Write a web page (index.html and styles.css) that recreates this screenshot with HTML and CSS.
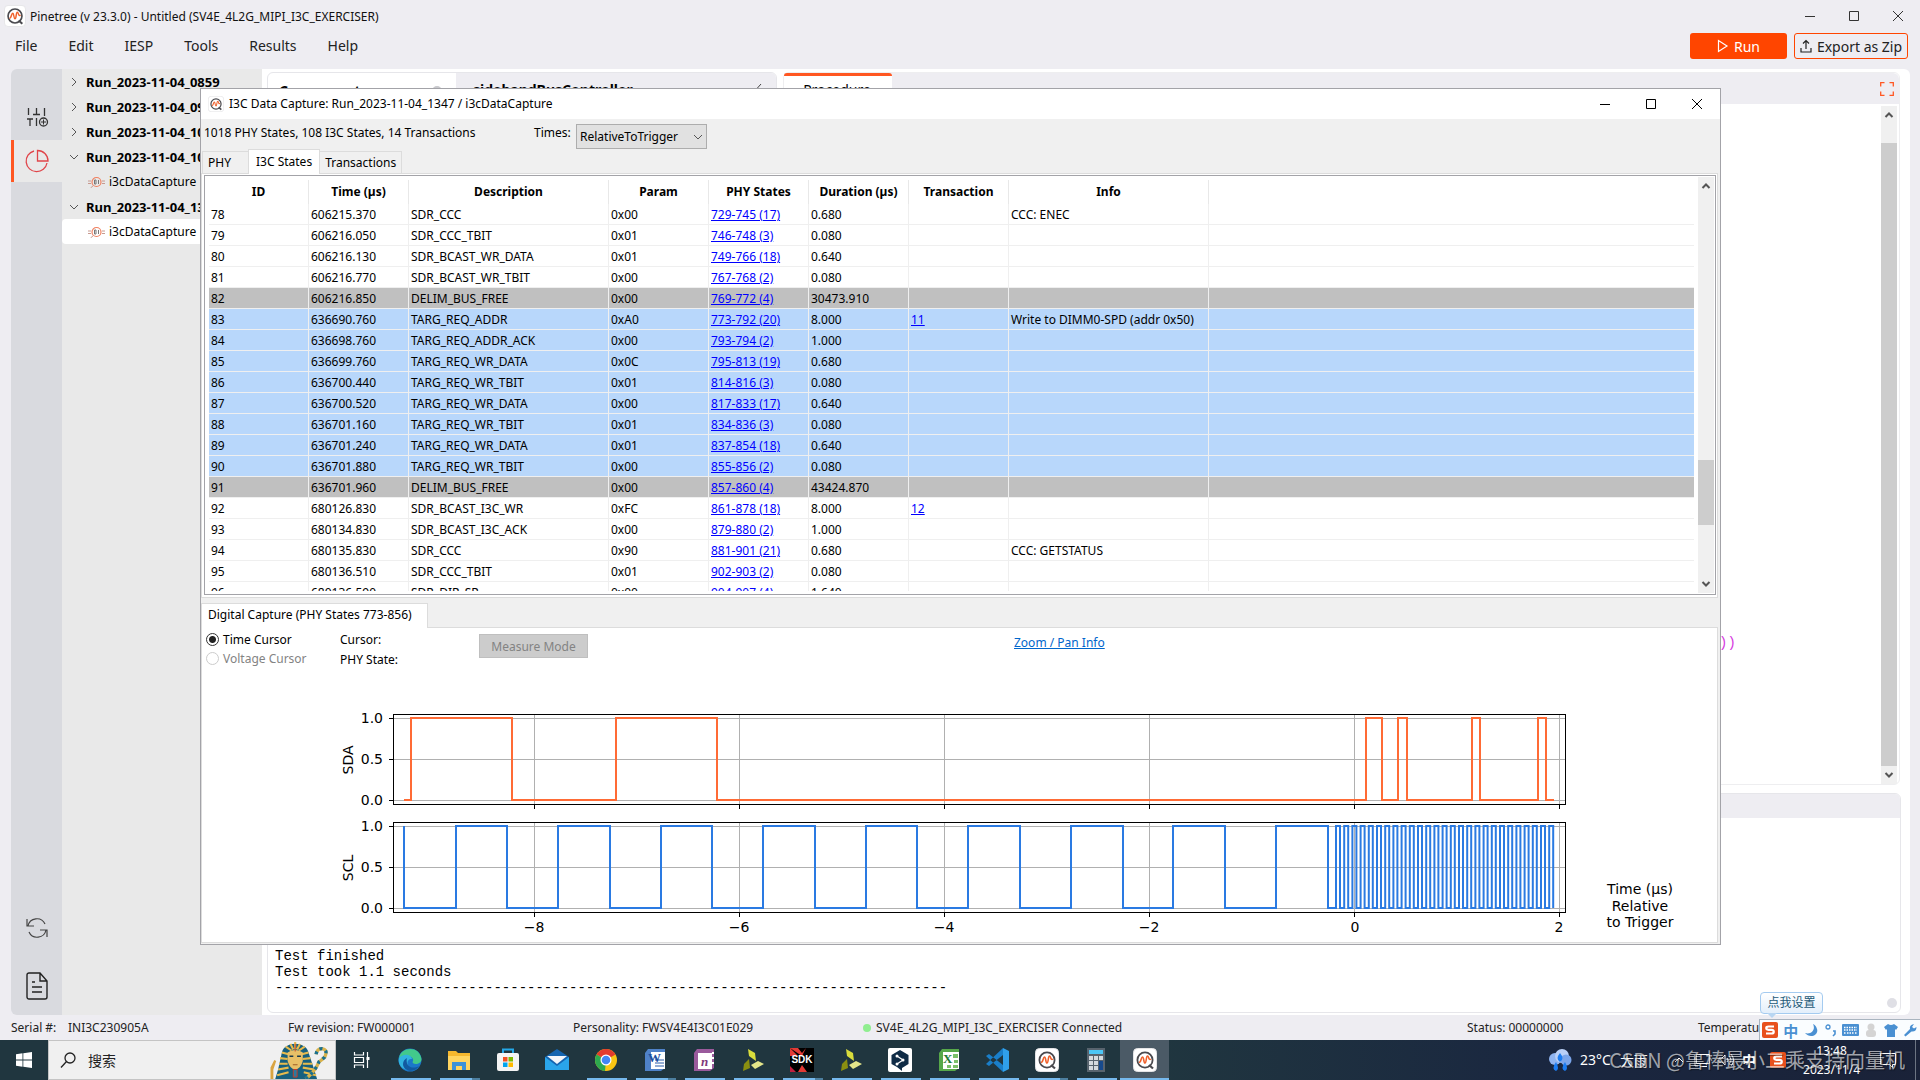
FILE: index.html
```html
<!DOCTYPE html>
<html lang="en">
<head>
  <meta charset="UTF-8" />
  <meta name="viewport" content="width=device-width, initial-scale=1.0"/>
  <title>Pinetree - I3C Data Capture</title>
  <link rel="stylesheet" href="styles.css">
</head>
<body>

  <!-- Shared icons -->
  <svg class="defs" aria-hidden="true">
    <symbol id="logo" viewBox="0 0 24 24">
      <rect x="0.5" y="0.5" width="23" height="23" rx="4" fill="#fff" stroke="#e4e4e6"/>
      <circle cx="12" cy="12" r="7.6" fill="none" stroke="#4a4a4f" stroke-width="1.8"/>
      <path d="M16 17l4 3.500" stroke="#4a4a4f" stroke-width="2.200"/>
      <path d="M6 14c2 1 2-5 3.500-5s1 6 2.500 6 1-7 2.500-7 1 5 3.500 3" fill="none" stroke="#f0602a" stroke-width="1.600"/>
    </symbol>
    <symbol id="capture" viewBox="0 0 17 12">
      <circle cx="8.500" cy="6" r="4.500" fill="none" stroke="#f08060" stroke-width="1.200"/>
      <path d="M0 5h3M0 7.500h3M14 5h3M14 7.500h3M5.500 9.500l-3 2.500" fill="none" stroke="#c79a90"/>
      <path d="M6.500 4h1.500v4h-1.500zM10.500 4v4" fill="none" stroke="#777"/>
    </symbol>
    <symbol id="right" viewBox="0 0 10 10"><path d="M3 1l4 4-4 4" fill="none" stroke="#555"/></symbol>
    <symbol id="down" viewBox="0 0 10 10"><path d="M1 3l4 4 4-4" fill="none" stroke="#555"/></symbol>
    <symbol id="sup" viewBox="0 0 10 10"><path d="M1.500 7L5 3.500 8.500 7" fill="none" stroke="#555" stroke-width="2"/></symbol>
    <symbol id="sdown" viewBox="0 0 10 10"><path d="M1.500 3L5 6.500 8.500 3" fill="none" stroke="#555" stroke-width="2"/></symbol>
    <symbol id="min" viewBox="0 0 10 10"><path d="M0 5.500h10" stroke="currentColor"/></symbol>
    <symbol id="max" viewBox="0 0 10 10"><path d="M.5.5h9v9h-9z" fill="none" stroke="currentColor"/></symbol>
    <symbol id="close" viewBox="0 0 10 10"><path d="M0 0l10 10M10 0L0 10" stroke="currentColor"/></symbol>
    <symbol id="xilinx" viewBox="0 0 24 24">
      <path d="M7 1l7 4 1 8-7-5z" fill="#d9dd3c"/>
      <path d="M8 11l1 9-7 3 1-7z" fill="#8a8f10"/>
      <path d="M10 17l7-4 6 3-9 5z" fill="#e3e58a"/>
    </symbol>
    <symbol id="sogou" viewBox="0 0 16 16">
      <rect width="16" height="16" rx="2" fill="#e8501c"/>
      <path d="M12 4.500H6.500c-3 0-3 3 0 3.300h3c3 0 3 3.700 0 3.700H4" fill="none" stroke="#fff" stroke-width="2.200"/>
    </symbol>
  </svg>

  <!-- Title bar -->
  <header class="titlebar">
    <svg class="app-logo"><use href="#logo"/></svg>
    <span>Pinetree (v 23.3.0) - Untitled (SV4E_4L2G_MIPI_I3C_EXERCISER)</span>
    <div class="win-buttons">
      <button aria-label="Minimize"><svg><use href="#min"/></svg></button>
      <button aria-label="Maximize"><svg><use href="#max"/></svg></button>
      <button aria-label="Close"><svg><use href="#close"/></svg></button>
    </div>
  </header>

  <!-- Menu -->
  <nav class="menubar">
    <a href="#">File</a>
    <a href="#">Edit</a>
    <a href="#">IESP</a>
    <a href="#">Tools</a>
    <a href="#">Results</a>
    <a href="#">Help</a>
    <div class="actions">
      <button class="run-btn"><svg viewBox="0 0 12 14"><path d="M1.500 1.500v11l8.500-5.500z" fill="none" stroke="#fff" stroke-width="1.200"/></svg>Run</button>
      <button class="export-btn"><svg viewBox="0 0 12 14"><path d="M1 9v4h10V9M6 10V2M3 4.500L6 1.500l3 3" fill="none" stroke="#222" stroke-width="1.200"/></svg>Export as Zip</button>
    </div>
  </nav>

  <!-- Main area -->
  <main class="main">
    <aside class="sidebar">
      <button class="side-btn" aria-label="Settings">
        <svg viewBox="0 0 24 20"><path d="M3.500 1v7M11.500 1v6M8 7.500h7M19.500 1v8M2 12h6M5 12v7M11.500 11v8" fill="none" stroke="#333" stroke-width="1.300"/><circle cx="18.500" cy="15" r="4" fill="none" stroke="#333" stroke-width="1.300"/><path d="M16 15h5M18.500 12.500v5" stroke="#333"/></svg>
      </button>
      <button class="side-btn active" aria-label="Results">
        <svg viewBox="0 0 24 24"><path d="M9 2A10.500 10.500 0 1 0 22 14" fill="none" stroke="#e0454a" stroke-width="1.300"/><path d="M12.500 1.500v10.500h10.500A10.500 10.500 0 0 0 12.500 1.500z" fill="none" stroke="#e0454a" stroke-width="1.300"/></svg>
      </button>
      <div class="side-bottom">
        <button class="side-btn" aria-label="Refresh">
          <svg viewBox="0 0 24 22"><path d="M3 9a9 9 0 0 1 17-2M21 13a9 9 0 0 1-17 2M2 2v7h7M22 20v-7h-7" fill="none" stroke="#444" stroke-width="1.200"/></svg>
        </button>
        <button class="side-btn" aria-label="Log">
          <svg class="doc" viewBox="0 0 22 28"><path d="M3 1h11l7 8v16a2 2 0 0 1-2 2H3a2 2 0 0 1-2-2V3a2 2 0 0 1 2-2zM14 1v8h7M6 10h3M6 15h10M6 20h10" fill="none" stroke="#222" stroke-width="1.400"/></svg>
        </button>
      </div>
    </aside>

    <ul class="tree">
      <li><svg><use href="#right"/></svg><b>Run_2023-11-04_0859</b></li>
      <li><svg><use href="#right"/></svg><b>Run_2023-11-04_09</b></li>
      <li><svg><use href="#right"/></svg><b>Run_2023-11-04_10</b></li>
      <li><svg><use href="#down"/></svg><b>Run_2023-11-04_10</b></li>
      <li class="child"><svg><use href="#capture"/></svg>i3cDataCapture</li>
      <li><svg><use href="#down"/></svg><b>Run_2023-11-04_1347</b></li>
      <li class="child selected"><svg><use href="#capture"/></svg>i3cDataCapture</li>
    </ul>

    <section class="workspace">
      <div class="upper">
        <div class="components">
          <div class="comp-head"><b>Components</b><span class="gear"></span></div>
          <div class="comp-head grey"><b>sidebandBusController</b><svg viewBox="0 0 10 10"><path d="M9 0L1 9" stroke="#444"/></svg></div>
        </div>
        <div class="procedure">
          <div class="proc-head">
            <button class="proc-tab">Procedure</button>
            <button class="expand" aria-label="Full screen"><svg viewBox="0 0 14 14"><path d="M.7 4.500V.7h3.800M9.500.7h3.800v3.800M13.300 9.500v3.800H9.500M4.500 13.300H.7V9.500" fill="none" stroke="#ff5722" stroke-width="1.300"/></svg></button>
          </div>
          <div class="proc-body">
            <code>))</code>
            <div class="scrollbar">
              <svg><use href="#sup"/></svg>
              <div class="thumb"></div>
              <svg><use href="#sdown"/></svg>
            </div>
          </div>
        </div>
      </div>
      <div class="console">
        <div class="console-head"></div>
<pre>Test finished
Test took 1.1 seconds
--------------------------------------------------------------------------------</pre>
        <span class="dot"></span>
      </div>
    </section>
  </main>

  <!-- Status bar -->
  <footer class="statusbar">
    <span class="serial">Serial #:</span>
    <span class="serial-no">INI3C230905A</span>
    <span class="fw">Fw revision: FW000001</span>
    <span class="personality">Personality: FWSV4E4I3C01E029</span>
    <span class="connected"><i></i>SV4E_4L2G_MIPI_I3C_EXERCISER Connected</span>
    <span class="state">Status: 00000000</span>
    <span class="temp">Temperature:</span>
  </footer>

  <!-- Capture window -->
  <section class="dialog">
    <header class="dialog-title">
      <svg class="app-logo"><use href="#logo"/></svg>
      <span>I3C Data Capture: Run_2023-11-04_1347 / i3cDataCapture</span>
      <div class="win-buttons">
        <button aria-label="Minimize"><svg><use href="#min"/></svg></button>
        <button aria-label="Maximize"><svg><use href="#max"/></svg></button>
        <button aria-label="Close"><svg><use href="#close"/></svg></button>
      </div>
    </header>

    <div class="info-row">
      <span class="counts">1018 PHY States, 108 I3C States, 14 Transactions</span>
      <label for="times">Times:</label>
      <div class="select-wrap">
        <select id="times"><option>RelativeToTrigger</option></select>
        <svg><use href="#down"/></svg>
      </div>
    </div>

    <div class="tabs">
      <button class="tab phy">PHY</button>
      <button class="tab active">I3C States</button>
      <button class="tab trans">Transactions</button>
    </div>

    <div class="pane states">
      <div class="frame">
        <div class="table-clip">
          <table>
            <colgroup><col class="w1"><col class="w1"><col class="w2"><col class="w1"><col class="w1"><col class="w1"><col class="w1"><col class="w2"><col></colgroup>
            <thead>
              <tr><th>ID</th><th>Time (µs)</th><th>Description</th><th>Param</th><th>PHY States</th><th>Duration (µs)</th><th>Transaction</th><th>Info</th><th></th></tr>
            </thead>
            <tbody>
              <tr><td>78</td><td>606215.370</td><td>SDR_CCC</td><td>0x00</td><td><a href="#">729-745 (17)</a></td><td>0.680</td><td></td><td>CCC: ENEC</td><td></td></tr>
              <tr><td>79</td><td>606216.050</td><td>SDR_CCC_TBIT</td><td>0x01</td><td><a href="#">746-748 (3)</a></td><td>0.080</td><td></td><td></td><td></td></tr>
              <tr><td>80</td><td>606216.130</td><td>SDR_BCAST_WR_DATA</td><td>0x01</td><td><a href="#">749-766 (18)</a></td><td>0.640</td><td></td><td></td><td></td></tr>
              <tr><td>81</td><td>606216.770</td><td>SDR_BCAST_WR_TBIT</td><td>0x00</td><td><a href="#">767-768 (2)</a></td><td>0.080</td><td></td><td></td><td></td></tr>
              <tr class="free"><td>82</td><td>606216.850</td><td>DELIM_BUS_FREE</td><td>0x00</td><td><a href="#">769-772 (4)</a></td><td>30473.910</td><td></td><td></td><td></td></tr>
              <tr class="sel"><td>83</td><td>636690.760</td><td>TARG_REQ_ADDR</td><td>0xA0</td><td><a href="#">773-792 (20)</a></td><td>8.000</td><td><a href="#">11</a></td><td>Write to DIMM0-SPD (addr 0x50)</td><td></td></tr>
              <tr class="sel"><td>84</td><td>636698.760</td><td>TARG_REQ_ADDR_ACK</td><td>0x00</td><td><a href="#">793-794 (2)</a></td><td>1.000</td><td></td><td></td><td></td></tr>
              <tr class="sel"><td>85</td><td>636699.760</td><td>TARG_REQ_WR_DATA</td><td>0x0C</td><td><a href="#">795-813 (19)</a></td><td>0.680</td><td></td><td></td><td></td></tr>
              <tr class="sel"><td>86</td><td>636700.440</td><td>TARG_REQ_WR_TBIT</td><td>0x01</td><td><a href="#">814-816 (3)</a></td><td>0.080</td><td></td><td></td><td></td></tr>
              <tr class="sel"><td>87</td><td>636700.520</td><td>TARG_REQ_WR_DATA</td><td>0x00</td><td><a href="#">817-833 (17)</a></td><td>0.640</td><td></td><td></td><td></td></tr>
              <tr class="sel"><td>88</td><td>636701.160</td><td>TARG_REQ_WR_TBIT</td><td>0x01</td><td><a href="#">834-836 (3)</a></td><td>0.080</td><td></td><td></td><td></td></tr>
              <tr class="sel"><td>89</td><td>636701.240</td><td>TARG_REQ_WR_DATA</td><td>0x01</td><td><a href="#">837-854 (18)</a></td><td>0.640</td><td></td><td></td><td></td></tr>
              <tr class="sel"><td>90</td><td>636701.880</td><td>TARG_REQ_WR_TBIT</td><td>0x00</td><td><a href="#">855-856 (2)</a></td><td>0.080</td><td></td><td></td><td></td></tr>
              <tr class="free"><td>91</td><td>636701.960</td><td>DELIM_BUS_FREE</td><td>0x00</td><td><a href="#">857-860 (4)</a></td><td>43424.870</td><td></td><td></td><td></td></tr>
              <tr><td>92</td><td>680126.830</td><td>SDR_BCAST_I3C_WR</td><td>0xFC</td><td><a href="#">861-878 (18)</a></td><td>8.000</td><td><a href="#">12</a></td><td></td><td></td></tr>
              <tr><td>93</td><td>680134.830</td><td>SDR_BCAST_I3C_ACK</td><td>0x00</td><td><a href="#">879-880 (2)</a></td><td>1.000</td><td></td><td></td><td></td></tr>
              <tr><td>94</td><td>680135.830</td><td>SDR_CCC</td><td>0x90</td><td><a href="#">881-901 (21)</a></td><td>0.680</td><td></td><td>CCC: GETSTATUS</td><td></td></tr>
              <tr><td>95</td><td>680136.510</td><td>SDR_CCC_TBIT</td><td>0x01</td><td><a href="#">902-903 (2)</a></td><td>0.080</td><td></td><td></td><td></td></tr>
              <tr><td>96</td><td>680136.590</td><td>SDR_DIR_SR</td><td>0x00</td><td><a href="#">904-907 (4)</a></td><td>1.640</td><td></td><td></td><td></td></tr>
            </tbody>
          </table>
        </div>
        <div class="scrollbar">
          <svg><use href="#sup"/></svg>
          <div class="track"><div class="thumb"></div></div>
          <svg><use href="#sdown"/></svg>
        </div>
      </div>
    </div>

    <div class="tabs lower">
      <button class="tab active">Digital Capture (PHY States 773-856)</button>
    </div>

    <div class="pane capture">
      <div class="controls">
        <div class="radios">
          <label><input type="radio" name="cursor" checked> Time Cursor</label>
          <label class="off"><input type="radio" name="cursor" disabled> Voltage Cursor</label>
        </div>
        <div class="readout">
          <span>Cursor:</span>
          <span>PHY State:</span>
        </div>
        <button class="measure" disabled>Measure Mode</button>
        <a class="zoom-info" href="#">Zoom / Pan Info</a>
      </div>

      <svg class="chart" viewBox="0 0 1515 268">
        <g fill="none" stroke="#b0b0b0">
          <path d="M332.500 42v90M537.500 42v90M742.500 42v90M947.500 42v90M1152.500 42v90M1357.500 42v90M191 46.500h1172M191 87.500h1172M191 128.500h1172"/>
          <path d="M332.500 150v90M537.500 150v90M742.500 150v90M947.500 150v90M1152.500 150v90M1357.500 150v90M191 154.500h1172M191 195.500h1172M191 236.500h1172"/>
        </g>
        <!-- SDA -->
        <path class="sda" d="M202 128H209V46H310V128H414V46H515V128H1164V46H1180V128H1196V46H1205V128H1270V46H1278V128H1336V46H1344V128H1352"/>
        <!-- SCL -->
        <path class="scl" d="M202 154V236H254V154H305V236H356V154H408V236H459V154H510V236H561V154H613V236H664V154H715V236H766V154H818V236H869V154H921V236H971V154H1023V236H1074V154H1126V236H1134V154
          h4v82h4.200v-82h4v82h4.200v-82h4v82h4.200v-82h4v82h4.200v-82h4v82h4.200v-82h4v82h4.200v-82h4v82h4.200v-82h4v82h4.200v-82h4v82h4.200v-82
          h4v82h4.200v-82h4v82h4.200v-82h4v82h4.200v-82h4v82h4.200v-82h4v82h4.200v-82h4v82h4.200v-82h4v82h4.200v-82h4v82h4.200v-82h4v82h4.200v-82
          h4v82h4.200v-82h4v82h4.200v-82h4v82h4.200v-82h4v82h4.200v-82h4v82h4.200v-82h4v82h4.200v-82h4v82h4.200v-82h4v82h4.200v-82h4v82"/>
        <g fill="none" stroke="#000">
          <rect x="191.500" y="42.500" width="1172" height="90"/>
          <rect x="191.500" y="150.500" width="1172" height="90"/>
          <path d="M187 46.500h4M187 87.500h4M187 128.500h4M187 154.500h4M187 195.500h4M187 236.500h4"/>
          <path d="M332.500 133v4M537.500 133v4M742.500 133v4M947.500 133v4M1152.500 133v4M1357.500 133v4"/>
          <path d="M332.500 241v4M537.500 241v4M742.500 241v4M947.500 241v4M1152.500 241v4M1357.500 241v4"/>
        </g>
        <g text-anchor="end">
          <text x="181" y="51">1.0</text><text x="181" y="92">0.5</text><text x="181" y="133">0.0</text>
          <text x="181" y="159">1.0</text><text x="181" y="200">0.5</text><text x="181" y="241">0.0</text>
        </g>
        <g text-anchor="middle">
          <text x="332" y="260">−8</text><text x="537" y="260">−6</text><text x="742" y="260">−4</text>
          <text x="947" y="260">−2</text><text x="1153" y="260">0</text><text x="1357" y="260">2</text>
          <text transform="translate(151 88) rotate(-90)">SDA</text>
          <text transform="translate(151 196) rotate(-90)">SCL</text>
          <text x="1438" y="222">Time (µs)</text>
          <text x="1438" y="239">Relative</text>
          <text x="1438" y="255">to Trigger</text>
        </g>
      </svg>
    </div>
  </section>

  <!-- Taskbar -->
  <div class="taskbar">
    <button class="start" aria-label="Start"><svg viewBox="0 0 16 16"><path d="M0 2.200l6.500-.9v6.200H0zM7.300 1.200L16 0v7.500H7.300zM0 8.400h6.500v6.300L0 13.800zM7.300 8.400H16V16l-8.700-1.200z" fill="#fff"/></svg></button>
    <div class="search">
      <svg viewBox="0 0 16 16"><circle cx="10" cy="6" r="5" fill="none" stroke="#222" stroke-width="1.300"/><path d="M6.500 9.500L1 15.500" stroke="#222" stroke-width="1.300"/></svg>
      <input type="text" placeholder="搜索" aria-label="搜索">
      <svg class="pharaoh" viewBox="0 0 62 40">
        <path d="M1 40V28l4-8 2 1-3 9v10z" fill="#d9a441"/>
        <path d="M13 12C16 0 38 0 41 12l6 18 3 10H6l3-10z" fill="#17607f"/>
        <path d="M17 6l6 4M22 3l3 6M27 1v8M32 3l-3 6M37 6l-6 4M13 12l7 2M41 12l-7 2M11 18l8 1M43 18l-8 1M10 24l9 0M45 24l-10 0M9 30l11-2M47 30l-12-2M8 36l12-3M49 36l-13-3" stroke="#e8bb4c" stroke-width="2.200"/>
        <path d="M19 12q8-5 16 0v9q-2 8-8 9-6-1-8-9z" fill="#e8c067"/>
        <path d="M21 16h4M29 16h4" stroke="#17384c" stroke-width="1.500"/><path d="M24.500 25h5" stroke="#9b5a23"/>
        <path d="M25 30h4v8h-4zM27 3v8" fill="#2a7aa0" stroke="#c43d2a"/>
        <path d="M38 40q10-8 14-18 3-2 6-5 4-8-3-9-5 0-6 6" fill="none" stroke="#d8b24c" stroke-width="3.500"/>
        <path d="M38 40q10-8 14-18 3-2 6-5 4-8-3-9-5 0-6 6" fill="none" stroke="#19708f" stroke-width="3.500" stroke-dasharray="3 4"/>
      </svg>
    </div>
    <div class="apps">
      <button aria-label="Task view"><svg viewBox="0 0 24 24"><path d="M5.500 4v3h9V4M5.500 20v-3h9v3M5.500 9.500h9v5h-9zM18.500 4v16" fill="none" stroke="#fff" stroke-width="1.200"/><path d="M17.500 9h3v3h-3z" fill="#fff"/></svg></button>
      <button class="open" aria-label="Edge"><svg viewBox="0 0 24 24"><circle cx="12" cy="12" r="11.500" fill="#1b78c9"/><path d="M1 10C3-1 21-3 23.500 11c0 6-9 6-9 3 2-3-1-6-5-6-4 0-7 1-8.500 2z" fill="#42c98b"/><path d="M1 10c3-4 12-5 13 1-5-1-7 7 0 10-7 3-15-3-13-11z" fill="#31b3df"/><path d="M9 10c-2 8 5 12 12 8-5 8-16 5-16-2 0-3 2-5 4-6z" fill="#125aa0"/></svg></button>
      <button class="open multi" aria-label="Explorer"><svg viewBox="0 0 24 24"><path d="M1 3h8l2 2h12v17H1z" fill="#f5b82e"/><path d="M1 8h22v14H1z" fill="#ffd560"/><path d="M5 22v-8h14v8h-4v-4H9v4z" fill="#3c92d8"/></svg></button>
      <button aria-label="Store"><svg viewBox="0 0 24 24"><path d="M7 6V1.500h10V6" fill="none" stroke="#24a8e8" stroke-width="2"/><rect x="1" y="5" width="22" height="18" rx="2" fill="#f4f4f4"/><path d="M7 9h4.500v4.500H7z" fill="#f25022"/><path d="M12.500 9H17v4.500h-4.500z" fill="#7fba00"/><path d="M7 14.500h4.500V19H7z" fill="#00a4ef"/><path d="M12.500 14.500H17V19h-4.500z" fill="#ffb900"/></svg></button>
      <button aria-label="Mail"><svg viewBox="0 0 24 24"><path d="M0 9l12-8 12 8v13H0z" fill="#1565b0"/><path d="M0 9l12 9 12-9v13H0z" fill="#2aa5ea"/><path d="M2 8h20l-10 8z" fill="#f3f6fa"/></svg></button>
      <button class="open" aria-label="Chrome"><svg viewBox="0 0 24 24"><circle cx="12" cy="12" r="11" fill="#f9c513"/><path d="M12 12L2.500 6.500A11 11 0 0 1 21.500 6.500z" fill="#e33b2e"/><path d="M12 12L2.500 6.500A11 11 0 0 0 11 23z" fill="#2da94f"/><circle cx="12" cy="12" r="5.500" fill="#fff"/><circle cx="12" cy="12" r="4.300" fill="#4286f5"/></svg></button>
      <button class="open multi" aria-label="Word"><svg viewBox="0 0 24 24"><path d="M5 1h17v19l-4 3H2V5z" fill="#4f82c8"/><path d="M8 4h14v17H8z" fill="#fff"/><path d="M12 12h9M12 15h9M12 18h9" stroke="#2a5caa"/><text x="5" y="14" class="glyph" fill="#1d4f9f">W</text></svg></button>
      <button class="open" aria-label="OneNote"><svg viewBox="0 0 24 24"><path d="M5 1h17v19l-4 3H2V5z" fill="#9a5a9c"/><path d="M6 5h14v16H6z" fill="#fff"/><path d="M20 5h2M20 10h2M20 15h2" stroke="#fff" stroke-width="2"/><text x="9" y="18" class="glyph slant" fill="#80397b">n</text></svg></button>
      <button class="open" aria-label="Xilinx"><svg><use href="#xilinx"/></svg></button>
      <button class="open multi" aria-label="SDK"><svg viewBox="0 0 24 24"><path d="M0 0h24v24H0z" fill="#000"/><path d="M0 0h8l4 5 4-5h0l-4 8zM0 0l8 8H0zM8 24l4-7 5 7z" fill="#e33a35"/><path d="M0 18l6 6H0z" fill="#c02040"/><text x="12" y="15" class="sdk" fill="#fff" text-anchor="middle">SDK</text></svg></button>
      <button class="open" aria-label="Xilinx"><svg><use href="#xilinx"/></svg></button>
      <button class="open" aria-label="DeepL"><svg viewBox="0 0 24 24"><rect width="24" height="24" rx="2" fill="#fff"/><path d="M12 2l8.500 5v9L14 20v3l-5-4-5.500-3V7z" fill="#0f2b46"/><path d="M9 8l6 4-6 4" fill="none" stroke="#fff" stroke-width="1.200"/><circle cx="9" cy="8" r="1.500" fill="#fff"/><circle cx="15" cy="12" r="1.500" fill="#fff"/><circle cx="9" cy="16" r="1.500" fill="#fff"/></svg></button>
      <button class="open" aria-label="Excel"><svg viewBox="0 0 24 24"><path d="M5 1h17v19l-4 3H2V5z" fill="#57a84a"/><path d="M6 4h16v17H6z" fill="#fff"/><path d="M16 6h5v4h-5zM17 12h4v3h-4zM10 17h4v3h-4zM16 17h5v3h-5z" fill="#7cc06a"/><text x="6" y="15" class="glyph" fill="#1f7a34">X</text></svg></button>
      <button class="open" aria-label="VS Code"><svg viewBox="0 0 24 24"><path d="M17 0l6 3v18l-6 3z" fill="#30a0ea"/><path d="M17 0v7L3 18l-3-2zM17 24v-7L3 6 0 8z" fill="#1a7fc9"/></svg></button>
      <button class="open multi" aria-label="Pinetree"><svg><use href="#logo"/></svg></button>
      <button class="open" aria-label="Calculator"><svg viewBox="0 0 24 24"><path d="M3 0h18v24H3z" fill="#58646e"/><path d="M5 2h14v4H5z" fill="#4cc6f5"/><path d="M5 8h4v4H5zM10 8h4v4h-4zM15 8h4v4h-4zM5 13h4v4H5zM10 13h4v4h-4zM5 18h4v4H5zM10 18h4v4h-4z" fill="#d5dade"/><path d="M15 13h4v9h-4z" fill="#174a8c"/></svg></button>
      <button class="open current" aria-label="Pinetree"><svg><use href="#logo"/></svg></button>
    </div>

    <div class="tray">
      <svg class="weather" viewBox="0 0 24 24"><circle cx="7" cy="11" r="6" fill="#8fb4f0"/><circle cx="14" cy="8" r="7" fill="#b9cff6"/><circle cx="18" cy="12" r="5.500" fill="#7aa5ea"/><path d="M12 5q5 6 0 9-5-3 0-9zM8 14q4 7 0 9-5-2 0-9zM17 14q4 7 0 9-5-2 0-9z" fill="#1c7cf0"/></svg>
      <div class="degrees"><span>23°C</span><span>大雨</span></div>
      <svg class="up" viewBox="0 0 10 10"><path d="M1 7l4-4 4 4" fill="none" stroke="#fff"/></svg>
      <svg viewBox="0 0 16 16"><path d="M2.500 2.500h13v9h-13zM6 14.500h7M1 5v9h3" fill="none" stroke="#fff"/></svg>
      <svg viewBox="0 0 16 16"><path d="M1 6h3l3-3v10l-3-3H1zM9 6q2 2 0 4M11 4q4 4 0 8M13 2q5 6 0 12" fill="none" stroke="#fff"/></svg>
      <span class="ime">中</span>
      <svg class="sg"><use href="#sogou"/></svg>
      <div class="clock"><span>13:48</span><span>2023/11/4</span></div>
      <svg class="notify" viewBox="0 0 16 16"><path d="M.5 1.500h15v11h-3v3l-3-3h-9z" fill="none" stroke="#fff"/></svg>
    </div>
    <span class="watermark">CSDN @鲁棒最小二乘支持向量机</span>
  </div>

  <!-- Input method bar -->
  <div class="ime-tip">点我设置</div>
  <div class="ime-bar">
    <svg class="sg"><use href="#sogou"/></svg>
    <b>中</b>
    <svg viewBox="0 0 14 14"><path d="M9 1c3 6-2 11-8 9 5 6 14 2 12-4-1-3-2-4-4-5z" fill="#4a90d2"/></svg>
    <svg viewBox="0 0 14 14"><circle cx="5" cy="4" r="2" fill="none" stroke="#4a90d2" stroke-width="1.300"/><path d="M10 8h2v3l-2 2" fill="none" stroke="#4a90d2" stroke-width="1.600"/></svg>
    <svg class="kbd" viewBox="0 0 17 12"><rect width="17" height="12" rx="1" fill="#4a90d2"/><path d="M2 3.500h13M2 6h13M2 9h2M5 9h7M13 9h2" stroke="#fff" stroke-width="1.400" stroke-dasharray="1.500 1"/></svg>
    <svg viewBox="0 0 14 14"><circle cx="7" cy="4" r="3.500" fill="#d4d4d4"/><rect x="2" y="7" width="10" height="7" rx="3" fill="#d4d4d4"/></svg>
    <svg viewBox="0 0 14 14"><path d="M4 1q3 2 6 0l4 3-2 3-1-1v8H3V6L2 7 0 4z" fill="#4a90d2"/></svg>
    <svg viewBox="0 0 14 14"><path d="M1 12l6-6q-1-4 4-5L9 4l2 1.500L13.500 4q0 5-5 4.500l-6 5z" fill="#4a90d2"/></svg>
  </div>

</body>
</html>
```
FILE: styles.css
```css
* { box-sizing: border-box; }
body { margin: 0; height: 100vh; display: flex; flex-direction: column; overflow: hidden; background: #eeedf2; font-family: "Noto Sans", "Noto Sans CJK SC", sans-serif; font-size: 12px; color: #000; position: relative; }
button { font: inherit; color: inherit; background: none; border: none; padding: 0; }
.defs { position: absolute; width: 0; height: 0; }

/* title + menu */
.titlebar { display: flex; align-items: center; height: 32px; padding-left: 4px; gap: 4px; color: #111; font-size: 12px; }
.titlebar .app-logo { width: 22px; height: 22px; }
.win-buttons { display: flex; margin-left: auto; }
.win-buttons button { width: 44px; height: 30px; display: flex; align-items: center; justify-content: center; color: #333; }
.win-buttons svg { width: 10px; height: 10px; }
.menubar { display: flex; align-items: center; height: 37px; padding: 0 12px 9px 15px; gap: 31px; }
.menubar a { color: #222; text-decoration: none; font-size: 14px; line-height: 18px; }
.actions { display: flex; gap: 7px; margin-left: auto; font-size: 14px; }
.actions button { height: 26px; border-radius: 3px; display: flex; align-items: center; justify-content: center; gap: 5px; }
.actions svg { width: 12px; height: 14px; }
.run-btn { width: 97px; background: #ff4500; color: #fff; }
.export-btn { width: 114px; border: 1px solid #ff4500; color: #222; white-space: nowrap; }

/* main */
.main { flex: 1; min-height: 0; display: flex; padding: 0 10px 0 11px; }
.sidebar { width: 51px; background: #d9dadf; border-radius: 6px 0 0 6px; display: flex; flex-direction: column; padding-top: 27px; }
.side-btn { height: 42px; width: 100%; display: flex; align-items: center; justify-content: center; border-left: 3px solid transparent; padding-right: 2px; }
.side-btn:first-child { margin-bottom: 2px; }
.side-btn svg { width: 24px; height: 24px; }
.side-btn .doc { height: 28px; }
.side-btn.active { background: #e9e9e9; border-color: #ff5722; }
.side-bottom { margin-top: auto; padding-bottom: 8px; display: flex; flex-direction: column; gap: 14px; }
.tree { list-style: none; margin: 0; padding: 0; width: 200px; background: #e9e9e9; }
.tree li { height: 25px; display: flex; align-items: center; padding-left: 7px; gap: 7px; white-space: nowrap; }
.tree li svg { width: 10px; height: 10px; }
.tree b { font-size: 13px; }
.tree .child { padding-left: 26px; gap: 4px; }
.tree .child svg { width: 17px; height: 12px; }
.tree .selected { background: #fff; border-radius: 4px 0 0 4px; }
.workspace { flex: 1; min-width: 0; background: #fff; border-radius: 0 6px 6px 0; display: flex; flex-direction: column; gap: 8px; padding: 3px 9px 2px 5px; }
.upper { flex: 1; min-height: 0; display: flex; gap: 6px; margin-right: 1px; }
.components { width: 510px; display: flex; align-items: flex-start; border: 1px solid #e6e6ea; border-radius: 6px; overflow: hidden; font-size: 14px; }
.comp-head { width: 188px; height: 32px; display: flex; align-items: center; justify-content: space-between; padding: 3px 14px 0 11px; }
.comp-head.grey { width: auto; flex: 1; background: #eeedf2; padding: 0 14px 0 17px; }
.comp-head svg { width: 10px; height: 10px; }
.gear { width: 10px; height: 10px; border-radius: 50%; background: #c8c8cc; }
.procedure { flex: 1; display: flex; flex-direction: column; border: 1px solid #eeeef0; border-radius: 6px; }
.proc-head { height: 31px; display: flex; justify-content: space-between; align-items: center; background: #eeedf2; border-radius: 0 6px 0 0; padding-right: 5px; }
.proc-tab { width: 108px; height: 31px; border-top: 3px solid #ff5722; background: #fff; border-radius: 3px 3px 0 0; font-size: 14px; padding-right: 2px; padding-bottom: 1px; }
.expand { height: 14px; }
.expand svg { width: 14px; height: 14px; display: block; }
.proc-body { flex: 1; display: flex; justify-content: space-between; padding: 2px 2px 0; }
.proc-body code { font: 14px "Liberation Mono", monospace; color: #d63be0; padding: 529px 0 0 933px; }
.scrollbar { width: 16px; background: #f0f0f0; display: flex; flex-direction: column; align-items: center; }
.scrollbar svg { width: 10px; height: 10px; margin: 4px 0; }
.scrollbar .thumb { width: 100%; background: #cdcdcd; }
.proc-body .thumb { flex: 1; margin-top: 19px; }
.console { height: 220px; position: relative; border: 1px solid #e6e6ea; border-radius: 6px; overflow: hidden; display: flex; flex-direction: column; }
.console-head { height: 24px; background: #eeedf2; }
.console pre { margin: auto 0 16px 7px; font: 14px/16px "Liberation Mono", monospace; }
.dot { position: absolute; right: 3px; bottom: 4px; width: 10px; height: 10px; border-radius: 50%; background: #dfdfe5; }

/* status bar */
.statusbar { height: 25px; display: grid; grid-template-columns: 57px 220px 285px 290px 604px 231px 1fr; align-items: center; padding-left: 11px; color: #222; white-space: nowrap; }
.connected { display: flex; align-items: center; gap: 5px; }
.connected i { width: 8px; height: 8px; border-radius: 50%; background: #90ee90; }

/* capture window */
.dialog { position: absolute; left: 200px; right: 199px; top: 88px; bottom: 135px; background: #f0f0f0; border: 1px solid #a3a3a8; display: flex; flex-direction: column; }
.dialog-title { height: 30px; background: #fff; display: flex; align-items: center; gap: 5px; padding-left: 7px; line-height: 16px; }
.dialog-title .app-logo { width: 16px; height: 16px; }
.dialog-title .win-buttons button { width: 46px; color: #000; }
.info-row { height: 30px; display: flex; align-items: flex-start; padding: 5px 0 0 3px; line-height: 18px; }
.counts { width: 330px; }
.info-row label { width: 42px; }
.select-wrap { position: relative; }
.select-wrap select { appearance: none; width: 131px; height: 25px; margin: 0; padding: 0 3px; font: inherit; color: #000; background: #e1e1e1; border: 1px solid #adadad; border-radius: 0; }
.select-wrap svg { position: absolute; right: 4px; top: 8px; width: 10px; height: 10px; }
.tabs { display: flex; align-items: flex-end; height: 24px; padding-left: 1px; }
.tab { height: 22px; padding: 0 5px; border: 1px solid #dcdcdc; border-bottom: none; background: #f0f0f0; }
.tab.phy { width: 46px; text-align: left; border-right: none; }
.tab.active { height: 25px; padding: 0 7px 1px; background: #fff; margin-bottom: -1px; z-index: 1; }
.tab.trans { width: 82px; border-left: none; }
.tabs.lower { height: 29px; padding-left: 0; }
.tabs.lower .tab { width: 227px; padding: 0 6px 3px; text-align: left; }
.pane { background: #fff; border: 1px solid #dcdcdc; margin-right: 2px; }
.states { flex: 1; min-height: 0; padding: 1px 1px 2px 2px; display: flex; }
.frame { flex: 1; min-width: 0; border: 1px solid #a3a3a8; display: flex; padding: 1px; gap: 4px; }
.table-clip { flex: 1; overflow: hidden; margin: 3px 0 2px 3px; }
table { width: 100%; table-layout: fixed; border-collapse: separate; border-spacing: 0; }
.w1 { width: 100px; }
.w2 { width: 200px; }
th { height: 24px; padding: 0 0 2px; border-right: 1px solid #e8e8e8; font-weight: bold; }
td { height: 21px; padding: 2px 2px 0; line-height: 18px; border-right: 1px solid #efefef; border-bottom: 1px solid #efefef; white-space: nowrap; }
th:last-child, td:last-child { border-right: none; }
td a { color: #00f; }
.free td { background: #c0c0c0; }
.sel td { background: #b8d7fb; }
.track { flex: 1; width: 100%; display: flex; flex-direction: column; }
.track .thumb { height: 65px; margin-top: 265px; }

/* digital capture */
.capture { padding: 2px 0; margin-bottom: 1px; }
.controls { height: 42px; display: flex; align-items: flex-start; }
.radios, .readout { display: flex; flex-direction: column; }
.radios { width: 138px; padding-left: 4px; }
.radios label { display: flex; align-items: center; gap: 4px; height: 19px; }
.radios input { appearance: none; width: 13px; height: 13px; margin: 0; border: 1px solid #333; border-radius: 50%; background: #fff; }
.radios input:checked { background: radial-gradient(#222 0 3px, #fff 4px); }
.radios .off { color: #838383; }
.radios input:disabled { border-color: #ccc; }
.readout { width: 139px; }
.readout span { height: 20px; line-height: 20px; }
.measure { width: 109px; height: 24px; margin-top: 4px; background: #ccc; border: 1px solid #bfbfbf; color: #838383; }
.zoom-info { color: #0066cc; margin: 4px 0 0 426px; }
.chart { display: block; width: 100%; height: auto; font: 14px "DejaVu Sans", sans-serif; }
.sda, .scl { fill: none; stroke-width: 2; }
.sda { stroke: #ff6b35; }
.scl { stroke: #2a7ae2; }

/* taskbar */
.taskbar { position: relative; height: 40px; display: flex; background: linear-gradient(90deg, #20363f 0%, #20363f 60%, #1a2740 80%, #1a2238 100%); color: #fff; }
.start { width: 48px; }
.start svg { width: 16px; height: 16px; display: block; margin: auto; }
.search { width: 288px; background: #f0f0f0; border: 1px solid #c4c4c4; display: flex; align-items: center; padding-left: 11px; gap: 12px; }
.search svg { width: 16px; height: 16px; flex: none; }
.search input { flex: 1; min-width: 0; border: none; background: none; padding: 0; font: 14px "Noto Sans CJK SC", sans-serif; }
.search input::placeholder { color: #222; }
.search .pharaoh { width: 62px; height: 38px; margin-right: 5px; }
.apps { display: flex; }
.apps button { width: 49px; position: relative; }
.apps svg { width: 24px; height: 24px; display: block; margin: auto; }
.apps .open::after { content: ""; position: absolute; left: 6px; right: 3px; bottom: 0; height: 2px; background: #76b9ed; }
.apps .multi::after { background: linear-gradient(90deg, #76b9ed 32px, #4d7f9f 32px); }
.apps .current { background: #4b5a66; }
.apps .current::after { left: 0; right: 0; }
.glyph { font: bold 13px "Liberation Serif", serif; }
.slant { font-style: italic; }
.sdk { font: bold 10px "Liberation Sans", sans-serif; }
.tray { display: flex; align-items: center; margin-left: auto; padding-right: 24px; gap: 8px; }
.tray svg { width: 16px; height: 16px; }
.tray .weather { width: 24px; height: 24px; }
.degrees { font-size: 14px; width: 86px; display: flex; gap: 9px; white-space: nowrap; }
.tray .up { width: 10px; height: 10px; margin-right: 2px; }
.tray .sg { margin-left: 6px; }
.ime { font-size: 14px; font-weight: bold; }
.clock { display: flex; flex-direction: column; align-items: center; line-height: 19px; margin: 0 12px 0 9px; }
.watermark { position: absolute; right: 15px; top: 6px; font: 20px/28px "Noto Sans CJK SC", sans-serif; color: rgba(255, 255, 255, 0.6); text-shadow: 1px 1px 1px rgba(0, 0, 0, 0.4); white-space: nowrap; }
.taskbar::after { content: ""; position: absolute; right: 4px; top: 0; bottom: 0; width: 1px; background: #6c7482; }

/* input method */
.ime-bar { position: absolute; right: 0; bottom: 40px; width: 161px; height: 21px; display: flex; align-items: center; justify-content: space-between; padding: 0 3px 0 2px; background: #fafdff; border: 1px solid #a9b4bf; border-right: none; border-bottom: none; color: #4a90d2; font-size: 15px; }
.ime-bar svg { width: 14px; height: 14px; }
.ime-bar .sg { width: 16px; height: 16px; }
.ime-bar .kbd { width: 17px; height: 12px; }
.ime-tip { position: absolute; right: 97px; bottom: 66px; width: 63px; height: 22px; line-height: 20px; text-align: center; color: #1f5a78; background: linear-gradient(#fff, #e3effb); border: 1px solid #a4cbf0; border-radius: 4px; }
.ime-tip::after { content: ""; position: absolute; left: 6px; top: 20px; border: 5px solid transparent; border-top-color: #b8d6f2; border-bottom: none; }
```
